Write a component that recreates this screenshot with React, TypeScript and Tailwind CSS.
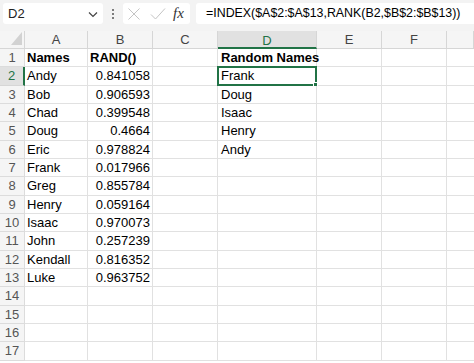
const cols = ["A", "B", "C", "D", "E", "F", ""];

const data: [string, string, string][] = [
  ["Names", "RAND()", "Random Names"],
  ["Andy", "0.841058", "Frank"],
  ["Bob", "0.906593", "Doug"],
  ["Chad", "0.399548", "Isaac"],
  ["Doug", "0.4664", "Henry"],
  ["Eric", "0.978824", "Andy"],
  ["Frank", "0.017966", ""],
  ["Greg", "0.855784", ""],
  ["Henry", "0.059164", ""],
  ["Isaac", "0.970073", ""],
  ["John", "0.257239", ""],
  ["Kendall", "0.816352", ""],
  ["Luke", "0.963752", ""],
  ["", "", ""],
  ["", "", ""],
  ["", "", ""],
  ["", "", ""],
];

const grid = "grid grid-cols-[25px_63px_65px_65px_99px_65px_65px_1fr]";

function Toolbar() {
  return (
    <div className="flex h-[31px] items-start bg-[#f3f3f3] pl-[3px] pt-[3px] text-[12.4px]">
      <div className="flex h-[21px] w-[100px] items-center justify-between rounded-[3px] bg-white pl-[5px] pr-[4px] text-[13px] text-[#222]">
        <span>D2</span>
        <svg width="12" height="12" viewBox="0 0 12 12" fill="none" stroke="#444" strokeWidth="1.2">
          <path d="M2 4.5 L6 8.5 L10 4.5" />
        </svg>
      </div>
      <div className="flex h-[21px] w-[20px] flex-col items-center justify-center gap-[2px]">
        <span className="h-[2px] w-[2px] rounded-full bg-[#555]" />
        <span className="h-[2px] w-[2px] rounded-full bg-[#555]" />
        <span className="h-[2px] w-[2px] rounded-full bg-[#555]" />
      </div>
      <div className="flex h-[21px] w-[67px] items-center rounded-[3px] bg-white pl-[4px]">
        <svg width="14" height="14" viewBox="0 0 14 14" fill="none" stroke="#c4c4c4" strokeWidth="1">
          <path d="M1.5 1.5 L12.5 12.5 M12.5 1.5 L1.5 12.5" />
        </svg>
        <svg className="ml-[9px]" width="16" height="14" viewBox="0 0 16 14" fill="none" stroke="#c4c4c4" strokeWidth="1">
          <path d="M1 7.5 L5.5 12 L15 1.5" />
        </svg>
        <span className="ml-[7px] font-['Liberation_Serif',serif] text-[15px] italic text-[#333]">fx</span>
      </div>
      <div className="ml-[6px] flex h-[21px] flex-1 items-center whitespace-nowrap rounded-l-[3px] bg-white pl-[10px] text-black">
        =INDEX($A$2:$A$13,RANK(B2,$B$2:$B$13))
      </div>
    </div>
  );
}

export default function App() {
  return (
    <div className="h-[363px] w-[474px] overflow-hidden whitespace-nowrap bg-white font-['Liberation_Sans',Arial,sans-serif] text-[13px] leading-none">
      <Toolbar />
      <div className={`${grid} h-[18px] bg-[#f5f5f5] text-[#444]`}>
        <div className="flex items-end justify-end border-b border-r border-[#d6d6d6] pb-[3px] pr-[2px]">
          <svg width="11" height="13" viewBox="0 0 11 13">
            <path d="M11 0 L11 13 L0 13 Z" fill="#d2d2d2" />
          </svg>
        </div>
        {cols.map((c, i) =>
          c === "D" ? (
            <div key={i} className="flex items-center justify-center border-b-2 border-r border-b-[#217346] border-r-[#d6d6d6] bg-[#e1e1e1] pt-[2px] text-[#217346]">
              {c}
            </div>
          ) : (
            <div key={i} className="flex items-center justify-center border-b border-r border-[#d6d6d6]">
              {c}
            </div>
          )
        )}
      </div>
      {data.map((row, r) => (
        <div key={r} className={`${grid} h-[18.33px] text-black`}>
          <div
            className={
              r === 1
                ? "flex items-center justify-center border-b border-r-2 border-b-[#d6d6d6] border-r-[#217346] bg-[#e1e1e1] text-[#217346]"
                : "flex items-center justify-center border-b border-r border-[#dcdcdc] bg-[#f5f5f5] text-[#555]"
            }
          >
            {r + 1}
          </div>
          <div className={`flex items-center border-b border-r border-[#e1e1e1] pl-[2px] ${r === 0 ? "font-bold" : ""}`}>
            {row[0]}
          </div>
          <div className={`flex items-center border-b border-r border-[#e1e1e1] pr-[2px] ${r === 0 ? "pl-[2px] font-bold" : "justify-end"}`}>
            {row[1]}
          </div>
          <div className="border-b border-r border-[#e1e1e1]" />
          <div className={`relative flex items-center border-b border-r border-[#e1e1e1] pl-[3px] ${r === 0 ? "font-bold" : ""}`}>
            {row[2]}
            {r === 1 && (
              <div className="absolute -left-[1px] -top-[1px] h-[19.3px] w-[100px] border-2 border-[#217346]">
                <span className="absolute -bottom-[3px] -right-[3px] h-[5px] w-[5px] border border-white bg-[#217346]" />
              </div>
            )}
          </div>
          <div className="border-b border-r border-[#e1e1e1]" />
          <div className="border-b border-r border-[#e1e1e1]" />
          <div className="border-b border-[#e1e1e1]" />
        </div>
      ))}
    </div>
  );
}
